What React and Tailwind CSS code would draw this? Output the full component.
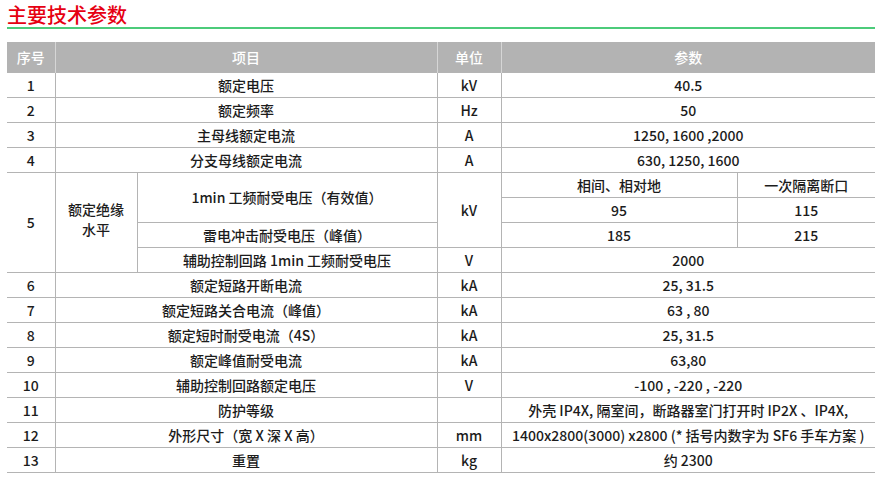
import React from 'react';

const rowsTop = [
  ['1', '额定电压', 'kV', '40.5'],
  ['2', '额定频率', 'Hz', '50'],
  ['3', '主母线额定电流', 'A', '1250, 1600 ,2000'],
  ['4', '分支母线额定电流', 'A', '630, 1250, 1600'],
];

const rowsBottom = [
  ['6', '额定短路开断电流', 'kA', '25, 31.5'],
  ['7', '额定短路关合电流（峰值）', 'kA', '63 , 80'],
  ['8', '额定短时耐受电流（4S）', 'kA', '25, 31.5'],
  ['9', '额定峰值耐受电流', 'kA', '63,80'],
  ['10', '辅助控制回路额定电压', 'V', '-100 , -220 , -220'],
  ['11', '防护等级', '', '外壳 IP4X, 隔室间，断路器室门打开时 IP2X 、IP4X,'],
  ['12', '外形尺寸（宽 X 深 X 高）', 'mm', '1400x2800(3000) x2800 (* 括号内数字为 SF6 手车方案 )'],
  ['13', '重置', 'kg', '约 2300'],
];

const td = 'border border-[#b4b4b4] p-0 text-center align-middle';
const first = td + ' border-l-0';
const last = td + ' border-r-0';

const SimpleRow = ({ r }) => (
  <tr className="h-[25px]">
    <td className={first}>{r[0]}</td>
    <td className={td} colSpan={2}>{r[1]}</td>
    <td className={td}>{r[2]}</td>
    <td className={last} colSpan={2}>{r[3]}</td>
  </tr>
);

export default function App() {
  return (
    <div className="w-[894px] h-[480px] bg-white px-[7px] pt-[3px]" style={{ fontFamily: '"Noto Sans CJK SC", "Noto Sans", sans-serif' }}>
      <h1 className="text-[20px] leading-[24px] font-medium text-[#e60012] w-[868px] border-b-2 border-[#4ccb7a] h-[26px]">主要技术参数</h1>
      <table className="mt-[13px] w-[868px] border-collapse table-fixed text-[14px] leading-[18px] font-medium text-[#1c1c1c]">
        <colgroup>
          <col className="w-[48px]" />
          <col className="w-[82px]" />
          <col className="w-[300px]" />
          <col className="w-[64px]" />
          <col className="w-[236px]" />
          <col className="w-[138px]" />
        </colgroup>
        <thead>
          <tr className="h-[30px] bg-[#b3b3b3] text-white">
            <th className="p-0 font-medium border-r border-[#d6d6d6]">序号</th>
            <th className="p-0 font-medium border-r border-[#d6d6d6]" colSpan={2}>项目</th>
            <th className="p-0 font-medium border-r border-[#d6d6d6]">单位</th>
            <th className="p-0 font-medium" colSpan={2}>参数</th>
          </tr>
        </thead>
        <tbody>
          {rowsTop.map((r) => <SimpleRow key={r[0]} r={r} />)}
          <tr className="h-[25px]">
            <td className={first} rowSpan={4}>5</td>
            <td className={td} rowSpan={4}>
              <div className="leading-[20px] -mt-[6px]">额定绝缘<br />水平</div>
            </td>
            <td className={td} rowSpan={2}>1min 工频耐受电压（有效值）</td>
            <td className={td} rowSpan={3}>kV</td>
            <td className={td}>相间、相对地</td>
            <td className={last}>一次隔离断口</td>
          </tr>
          <tr className="h-[25px]">
            <td className={td}>95</td>
            <td className={last}>115</td>
          </tr>
          <tr className="h-[25px]">
            <td className={td}>雷电冲击耐受电压（峰值）</td>
            <td className={td}>185</td>
            <td className={last}>215</td>
          </tr>
          <tr className="h-[25px]">
            <td className={td}>辅助控制回路 1min 工频耐受电压</td>
            <td className={td}>V</td>
            <td className={last} colSpan={2}>2000</td>
          </tr>
          {rowsBottom.map((r) => <SimpleRow key={r[0]} r={r} />)}
        </tbody>
      </table>
    </div>
  );
}
